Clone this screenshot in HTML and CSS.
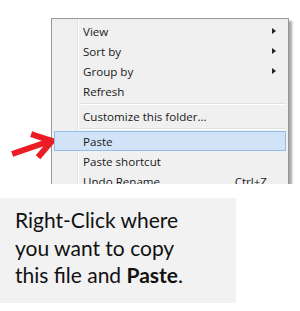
FILE: index.html
```html
<!DOCTYPE html>
<html lang="en">

<head>
  <meta charset="UTF-8">
  <title>Paste here</title>
  <link rel="stylesheet" href="styles.css">
</head>

<body>
  <div class="stage">
    <svg class="pointer" width="60" height="30" viewBox="0 0 60 30">
      <path d="M5 23 L40 11 M24 5 L42 11 L30 25" fill="none" stroke="#ec1c24" stroke-width="6" stroke-linecap="square" stroke-linejoin="miter" />
    </svg>
    <div class="menu-clip">
      <ul class="menu">
        <li class="item sub">View</li>
        <li class="item sub">Sort by</li>
        <li class="item sub">Group by</li>
        <li class="item">Refresh</li>
        <li class="sep"></li>
        <li class="item">Customize this folder...</li>
        <li class="sep"></li>
        <li class="item active">Paste</li>
        <li class="item">Paste shortcut</li>
        <li class="item">Undo Rename<span class="key">Ctrl+Z</span></li>
      </ul>
    </div>
  </div>

  <p class="tip">Right-Click where<br>you want to copy<br>this file and <b>Paste</b>.</p>
</body>

</html>
```

FILE: styles.css
```css
/* Base styles */
body {
  margin: 0;
  background: #fff;
}

.stage {
  position: relative;
  padding: 18px 0 0 51px;
}

/* red arrow pointing at Paste */
.pointer {
  position: absolute;
  left: 10px;
  top: 130px;
}

/* the menu runs on below, the screenshot cuts it off */
.menu-clip {
  width: 244px;
  height: 166px;
  overflow: hidden;
}

.menu {
  list-style: none;
  margin: 0;
  padding: 2px 2px 20px;
  width: 232px;
  background: #f0f0f0;
  border: 1px solid #979797;
  box-shadow: 3px 3px 2px #a8a8a8;
  font-family: "Open Sans", sans-serif;
  font-size: 11.6px;
  color: #1a1a1a;
  background-image: linear-gradient(to right, transparent 25px, #e2e3e3 25px, #e2e3e3 26px, #fff 26px, #fff 27px, transparent 27px);
}

.item {
  position: relative;
  display: flex;
  justify-content: space-between;
  align-items: center;
  height: 20px;
  padding: 0 18px 0 28px;
  border: 1px solid transparent;
  box-sizing: border-box;
}

.item.sub::after {
  content: "";
  position: absolute;
  right: 9px;
  top: 6px;
  border-left: 4px solid #222;
  border-top: 3.5px solid transparent;
  border-bottom: 3.5px solid transparent;
}

.item.active {
  background: #d1e3f6;
  border-color: #94bde8;
}

.sep {
  height: 1px;
  margin: 2px 0 1px 27px;
  background: #e0e0e0;
  border-bottom: 1px solid #fff;
}

.key {
  color: #1a1a1a;
}

.tip {
  margin: 14px 0 0;
  width: 221px;
  padding: 8px 0 14px 15px;
  background: #f2f2f2;
  font-family: Lato, sans-serif;
  font-size: 21px;
  line-height: 27.5px;
  color: #111;
}

.tip b {
  font-weight: 700;
}
```
